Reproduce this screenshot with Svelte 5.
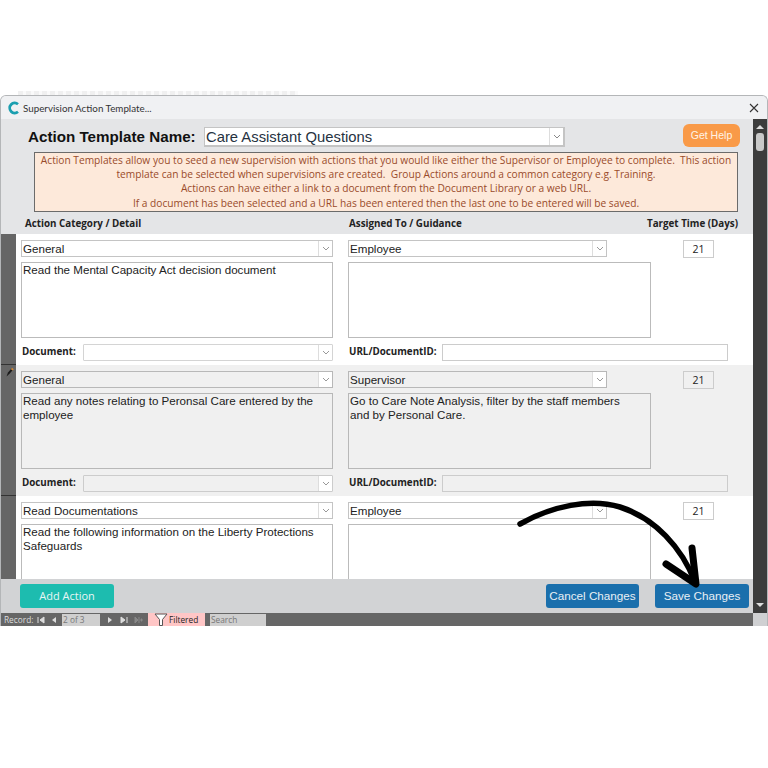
<script>
  const rows = [
    { cat: 'General', detail: 'Read the Mental Capacity Act decision document', who: 'Employee', guide: '', edit: false, alt: false, docs: true },
    { cat: 'General', detail: 'Read any notes relating to Peronsal Care entered by the\nemployee', who: 'Supervisor', guide: 'Go to Care Note Analysis, filter by the staff members\nand by Personal Care.', edit: true, alt: true, docs: true },
    { cat: 'Read Documentations', detail: 'Read the following information on the Liberty Protections\nSafeguards', who: 'Employee', guide: '', edit: false, alt: false, docs: false }
  ];
</script>

<div class="page">
  <div class="behind"></div>
  <div class="window">
    <div class="titlebar">
      <svg class="logo" viewBox="0 0 14 14" width="14" height="14"><path d="M11 3.2A5 5 0 1 0 11 10.8" fill="none" stroke="#1b9fb0" stroke-width="2.8"/></svg>
      <span class="wintitle">Supervision Action Template...</span>
      <svg class="close" viewBox="0 0 10 10" width="10" height="10"><path d="M1 1L9 9M9 1L1 9" stroke="#333" stroke-width="1.1"/></svg>
    </div>
    <div class="middle">
      <div class="content">
        <div class="head">
          <div class="nameline">
            <span class="namelabel">Action Template Name:</span>
            <div class="combo namecombo"><span>Care Assistant Questions</span><i class="drop"><svg viewBox="0 0 8 5" width="8" height="5"><path d="M1 1L4 4L7 1" fill="none" stroke="#888"/></svg></i></div>
            <button class="help">Get Help</button>
          </div>
          <div class="notes">
            Action Templates allow you to seed a new supervision with actions that you would like either the Supervisor or Employee to complete.&nbsp; This action<br />
            template can be selected when supervisions are created.&nbsp; Group Actions around a common category e.g. Training.<br />
            Actions can have either a link to a document from the Document Library or a web URL.<br />
            If a document has been selected and a URL has been entered then the last one to be entered will be saved.
          </div>
          <div class="cols">
            <span>Action Category / Detail</span>
            <span>Assigned To / Guidance</span>
            <span class="tt">Target Time (Days)</span>
          </div>
        </div>
        <div class="rows">
          {#each rows as r}
            <div class="row" class:alt={r.alt}>
              <div class="selector">
                {#if r.edit}
                  <svg viewBox="0 0 10 10" width="10" height="10"><path d="M1.5 9.5L3 5.5L6.5 1.5L8 2.8L4.5 6.8Z" fill="#1a1a1a"/><path d="M5.8 2.2L7 0.8L8.8 2.2L7.6 3.5Z" fill="#d08a3a"/></svg>
                {/if}
              </div>
              <div class="cells">
                <div class="top">
                  <div class="combo c1"><span>{r.cat}</span><i class="drop"><svg viewBox="0 0 8 5" width="8" height="5"><path d="M1 1L4 4L7 1" fill="none" stroke="#999"/></svg></i></div>
                  <div class="combo c2"><span>{r.who}</span><i class="drop"><svg viewBox="0 0 8 5" width="8" height="5"><path d="M1 1L4 4L7 1" fill="none" stroke="#999"/></svg></i></div>
                  <div class="days">21</div>
                </div>
                <div class="mid">
                  <div class="area a1">{r.detail}</div>
                  <div class="area a2">{r.guide}</div>
                </div>
                {#if r.docs}
                  <div class="bottom">
                    <span class="doclabel">Document:</span>
                    <div class="combo c3"><i class="drop"><svg viewBox="0 0 8 5" width="8" height="5"><path d="M1 1L4 4L7 1" fill="none" stroke="#999"/></svg></i></div>
                    <span class="urllabel">URL/DocumentID:</span>
                    <div class="url"></div>
                  </div>
                {/if}
              </div>
            </div>
          {/each}
        </div>
        <div class="footer">
          <button class="add">Add Action</button>
          <div class="actions">
            <button class="blue">Cancel Changes</button>
            <button class="blue save">Save Changes</button>
          </div>
        </div>
      </div>
      <div class="scroll">
        <svg viewBox="0 0 14 10" width="14" height="10"><path d="M7 3L11 7H3Z" fill="#ddd"/></svg>
        <div class="thumb"></div>
        <div class="spacer"></div>
        <svg viewBox="0 0 14 10" width="14" height="10"><path d="M3 3H11L7 7Z" fill="#ddd"/></svg>
      </div>
    </div>
    <div class="nav">
      <span class="rec">Record:</span>
      <svg class="i1" viewBox="0 0 10 8" width="10" height="8"><path d="M2 1V7M8 1L4 4L8 7Z" stroke="#ddd" fill="#ddd"/></svg>
      <svg class="i2" viewBox="0 0 10 8" width="10" height="8"><path d="M7 1L3 4L7 7Z" fill="#ddd"/></svg>
      <span class="count">2 of 3</span>
      <svg class="i3" viewBox="0 0 10 8" width="10" height="8"><path d="M3 1L7 4L3 7Z" fill="#ddd"/></svg>
      <svg class="i4" viewBox="0 0 10 8" width="10" height="8"><path d="M2 1L6 4L2 7ZM8 1V7" stroke="#ddd" fill="#ddd"/></svg>
      <svg class="i5" viewBox="0 0 10 8" width="10" height="8"><path d="M1 1L4 4L1 7ZM5 1V7M6 4H9M7.5 2.5V5.5" stroke="#888" fill="#888"/></svg>
      <span class="filtered">
        <svg viewBox="0 0 14 13" width="14" height="13"><path d="M1 1H13L8.5 6.5V12.5H5.5V6.5Z" fill="#fff" stroke="#555"/></svg>
        Filtered
      </span>
      <span class="search">Search</span>
      <span class="corner"></span>
    </div>
  </div>
  <svg class="arrow" viewBox="0 0 768 768" width="768" height="768">
    <path d="M520 524C552 506 590 498 620 507C655 518 682 548 695 582" fill="none" stroke="#000" stroke-width="5.5" stroke-linecap="round"/>
    <path d="M666 564L696 584L692 548" fill="none" stroke="#000" stroke-width="7" stroke-linecap="round" stroke-linejoin="round"/>
  </svg>
</div>

<style>
  :global(body) { margin: 0; background: #fff; }
  .page { position: relative; width: 768px; height: 768px; padding-top: 91px; box-sizing: border-box; overflow: hidden; font-family: "Liberation Sans", Arial, sans-serif; }
  .behind { width: 280px; height: 4px; margin-left: 18px; background: repeating-linear-gradient(90deg, #f0f0f0 0 5px, #fafafa 5px 8px); }
  .window { width: 768px; height: 531px; display: flex; flex-direction: column; box-sizing: border-box; border: 1px solid #b4b6b8; border-bottom: 0; border-radius: 6px 6px 0 0; overflow: hidden; background: #e4e5e7; }
  .titlebar { height: 23px; flex: none; display: flex; align-items: center; padding: 0 8px 0 6px; background: #f0f1f3; }
  .logo { flex: none; }
  .wintitle { margin-left: 2px; font: 9.8px Lato, sans-serif; color: #333; flex: 1; }
  .middle { display: flex; flex: 1; min-height: 0; }
  .content { flex: 1; min-width: 0; display: flex; flex-direction: column; }
  .head { height: 115px; flex: none; box-sizing: border-box; background: #e4e5e7; }
  .nameline { height: 33px; display: flex; align-items: flex-start; padding-left: 27px; }
  .namelabel { font-weight: 700; font-size: 15.2px; color: #111; margin-top: 9px; width: 176px; white-space: nowrap; }
  .combo { position: relative; box-sizing: border-box; background: #fff; border: 1px solid #c4c4c4; display: flex; align-items: center; padding: 0 0 1px 1px; font-size: 11.6px; color: #222; white-space: nowrap; }
  .namecombo { width: 361px; height: 20px; margin-top: 8px; padding-bottom: 0; font-size: 14.8px; color: #26323f; border-width: 1px 2px 2px 1px; }
  .drop { position: absolute; right: 0; top: 0; bottom: 0; width: 13px; display: flex; align-items: center; justify-content: center; background: #fff; border-left: 1px solid #ddd; }
  .help { width: 57px; height: 23px; margin-top: 5px; margin-left: 118px; padding: 0 0 1px; border: 0; border-radius: 6px; background: #f99a48; color: #fff3e6; font: 10.5px "Liberation Sans", sans-serif; }
  .notes { box-sizing: border-box; margin-left: 33px; width: 704px; height: 60px; border: 1px solid #6b6b6b; background: #fde9da; color: #9a4b2a; text-align: center; font: 10.2px/14.2px "Open Sans", sans-serif; white-space: nowrap; }
  .cols { height: 22px; display: grid; grid-template-columns: 324px 298px 1fr; align-items: center; padding-left: 24px; font: 700 9.8px "Open Sans", sans-serif; color: #222; }
  .tt { white-space: nowrap; }
  .rows { height: 345px; flex: none; overflow: hidden; background: #fff; }
  .row { height: 131px; display: flex; background: #fff; }
  .row.alt { background: #f0f0f0; }
  .row.alt .combo, .row.alt .area, .row.alt .url, .row.alt .days { background: #f0f0f0; border-color: #b8b8b8; }
  .row.alt .c3, .row.alt .url, .row.alt .days { border-color: #ccc; }
  .selector { width: 15px; flex: none; background: #666; border-bottom: 1px solid #333; box-sizing: border-box; padding-left: 4px; padding-top: 2px; }
  .selector svg { display: block; }
  .cells { flex: 1; display: flex; flex-direction: column; padding-top: 6px; padding-left: 5px; box-sizing: border-box; }
  .top { display: flex; height: 18px; align-items: flex-start; }
  .c1 { width: 312px; height: 17px; }
  .c2 { width: 259px; height: 17px; margin-left: 15px; }
  .days { box-sizing: border-box; width: 31px; height: 18px; margin-left: 76px; background: #fff; border: 1px solid #ccc; text-align: center; font: 10.5px/16px "Open Sans", sans-serif; color: #222; }
  .mid { display: flex; margin-top: 4px; height: 76px; }
  .area { box-sizing: border-box; height: 76px; background: #fff; border: 1px solid #bbb; padding: 0 1px 0 1px; font-size: 11.6px; line-height: 14px; color: #222; white-space: pre; overflow: hidden; }
  .a1 { width: 312px; }
  .a2 { width: 303px; margin-left: 15px; }
  .bottom { display: flex; align-items: center; height: 17px; margin-top: 6px; }
  .doclabel { width: 62px; padding: 0 0 2px 1px; box-sizing: border-box; font: 700 9.8px "Open Sans", sans-serif; color: #222; }
  .c3 { width: 250px; height: 17px; border-color: #d4d4d4; border-radius: 1px; }
  .urllabel { width: 94px; margin-left: 15px; box-sizing: border-box; padding: 0 0 2px 1px; font: 700 9.8px "Open Sans", sans-serif; color: #222; white-space: nowrap; }
  .url { box-sizing: border-box; width: 286px; height: 17px; background: #fff; border: 1px solid #ccc; }
  .footer { flex: 1; display: flex; justify-content: space-between; align-items: flex-start; background: #d2d3d5; padding: 5px 4px 0 19px; }
  .add { width: 94px; height: 24px; padding: 0 0 2px; border: 0; border-radius: 3px; background: #1dbcaf; color: #e8f6f5; font: 11px "Open Sans", sans-serif; }
  .actions { display: flex; gap: 16px; }
  .blue { width: 93px; height: 24px; padding: 0 0 1px; border: 0; border-radius: 3px; background: #1a6fac; color: #e8eff5; font: 11.7px "Liberation Sans", sans-serif; }
  .save { width: 94px; }
  .scroll { width: 14px; flex: none; background: #3c3c3c; display: flex; flex-direction: column; align-items: center; padding: 3px 0 3px; box-sizing: border-box; }
  .thumb { width: 8px; height: 18px; margin-top: 1px; border-radius: 3px; background: #c9c9c9; }
  .spacer { flex: 1; }
  .nav { height: 13px; flex: none; display: flex; align-items: center; background: #666; color: #ddd; font: 8.3px "Open Sans", sans-serif; padding-left: 3px; white-space: nowrap; }
  .nav svg { flex: none; }
  .rec { width: 32px; flex: none; }
  .i2 { margin-left: 3px; }
  .count { flex: none; width: 38px; height: 12px; line-height: 12px; margin-left: 3px; padding-left: 1px; box-sizing: border-box; background: #cfcfcf; color: #777; }
  .i3 { margin-left: 5px; }
  .i4 { margin-left: 4px; }
  .i5 { margin-left: 5px; }
  .filtered { flex: none; width: 57px; height: 13px; margin-left: 4px; box-sizing: border-box; background: #ffc6c6; color: #222; display: flex; align-items: center; gap: 1px; padding-left: 6px; }
  .search { flex: none; width: 56px; height: 12px; line-height: 12px; margin-left: 5px; padding-left: 1px; box-sizing: border-box; background: #cfcfcf; color: #777; }
  .corner { margin-left: auto; flex: none; width: 14px; height: 13px; background: #cfd0d2; }
  .arrow { position: absolute; left: 0; top: 0; pointer-events: none; }
</style>
